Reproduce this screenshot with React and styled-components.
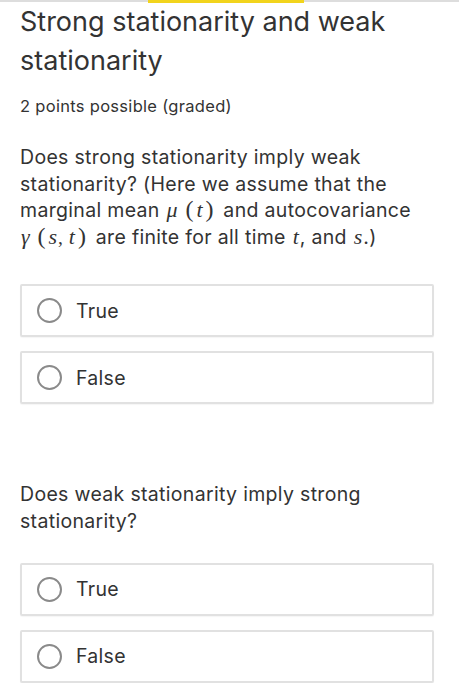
import styled, { createGlobalStyle } from "styled-components";

const GlobalStyle = createGlobalStyle`
  body {
    margin: 0;
    background: #fff;
    font-family: Inter, "Noto Sans", sans-serif;
    color: #333;
  }
`;

const Math = styled.span`
  white-space: nowrap;
  font-family: "Liberation Serif", serif;
  letter-spacing: 0;
  line-height: 0;
  padding-right: ${(p) => (p.$pad ? "2px" : "0")};
`;

const M = styled.i`
  font-size: 22px;
  padding: 0 1px;
`;

const P = styled.span`
  font-size: 24px;
  padding: 0 2px;
`;

const questions = [
  {
    id: "q1",
    text: () => (
      <>
        Does strong stationarity imply weak stationarity? (Here we assume that
        the marginal mean{" "}
        <Math $pad>
          <M>μ</M> <P>(</P>
          <M>t</M>
          <P>)</P>
        </Math>{" "}
        and autocovariance{" "}
        <Math $pad>
          <M>γ</M> <P>(</P>
          <M>s</M>, <M>t</M>
          <P>)</P>
        </Math>{" "}
        are finite for all time{" "}
        <Math>
          <M>t</M>
        </Math>
        , and{" "}
        <Math>
          <M>s</M>
        </Math>
        .)
      </>
    ),
  },
  {
    id: "q2",
    text: () => <>Does weak stationarity imply strong stationarity?</>,
  },
];

function App() {
  return (
    <>
      <GlobalStyle />
      <S.TopBar>
        <S.Progress />
      </S.TopBar>
      <S.Wrapper>
        <S.Title>Strong stationarity and weak stationarity</S.Title>
        <S.Points>2 points possible (graded)</S.Points>
        {questions.map((q, i) => (
          <S.Question key={q.id} $first={i === 0}>
            <S.Prompt $first={i === 0}>{q.text()}</S.Prompt>
            <S.Options>
              {["True", "False"].map((label) => (
                <S.Option key={label}>
                  <S.Radio type="radio" name={q.id} />
                  <span>{label}</span>
                </S.Option>
              ))}
            </S.Options>
          </S.Question>
        ))}
      </S.Wrapper>
    </>
  );
}
export default App;

const TopBar = styled.div`
  height: 2px;
  background: #ddd;
  position: relative;
`;

const Progress = styled.div`
  position: absolute;
  left: 148px;
  width: 156px;
  top: 0;
  height: 3px;
  background: #f2d41c;
`;

const Wrapper = styled.div`
  padding: 0 25px 0 20px;
`;

const Title = styled.h1`
  margin: 0;
  font-size: 27px;
  font-weight: 400;
  line-height: 39px;
  color: #333;
`;

const Points = styled.p`
  margin: 16px 0 0;
  font-size: 16.5px;
  letter-spacing: 0.3px;
  line-height: 20px;
  color: #333;
`;

const Question = styled.div`
  margin-top: ${(p) => (p.$first ? "28px" : "77px")};
`;

const Prompt = styled.p`
  margin: 0 0 ${(p) => (p.$first ? "34px" : "28px")};
  padding-right: 16px;
  font-size: 19.5px;
  letter-spacing: 0.32px;
  line-height: 26.6px;
  color: #333;
`;

const Options = styled.div`
  display: flex;
  flex-direction: column;
  gap: 14px;
`;

const Option = styled.label`
  display: flex;
  align-items: center;
  gap: 14px;
  height: 53px;
  box-sizing: border-box;
  padding: 0 15px;
  border: 2px solid #e1e1e1;
  border-radius: 2px;
  box-shadow: 0 1px 1px rgba(0, 0, 0, 0.04);
  font-size: 19.5px;
  letter-spacing: 0.3px;
  color: #333;
`;

const Radio = styled.input`
  appearance: none;
  margin: 0;
  width: 25px;
  height: 25px;
  border: 2px solid #8a8a8a;
  border-radius: 50%;
  background: #fff;
`;

const S = {
  TopBar,
  Progress,
  Wrapper,
  Title,
  Points,
  Question,
  Prompt,
  Options,
  Option,
  Radio,
};
